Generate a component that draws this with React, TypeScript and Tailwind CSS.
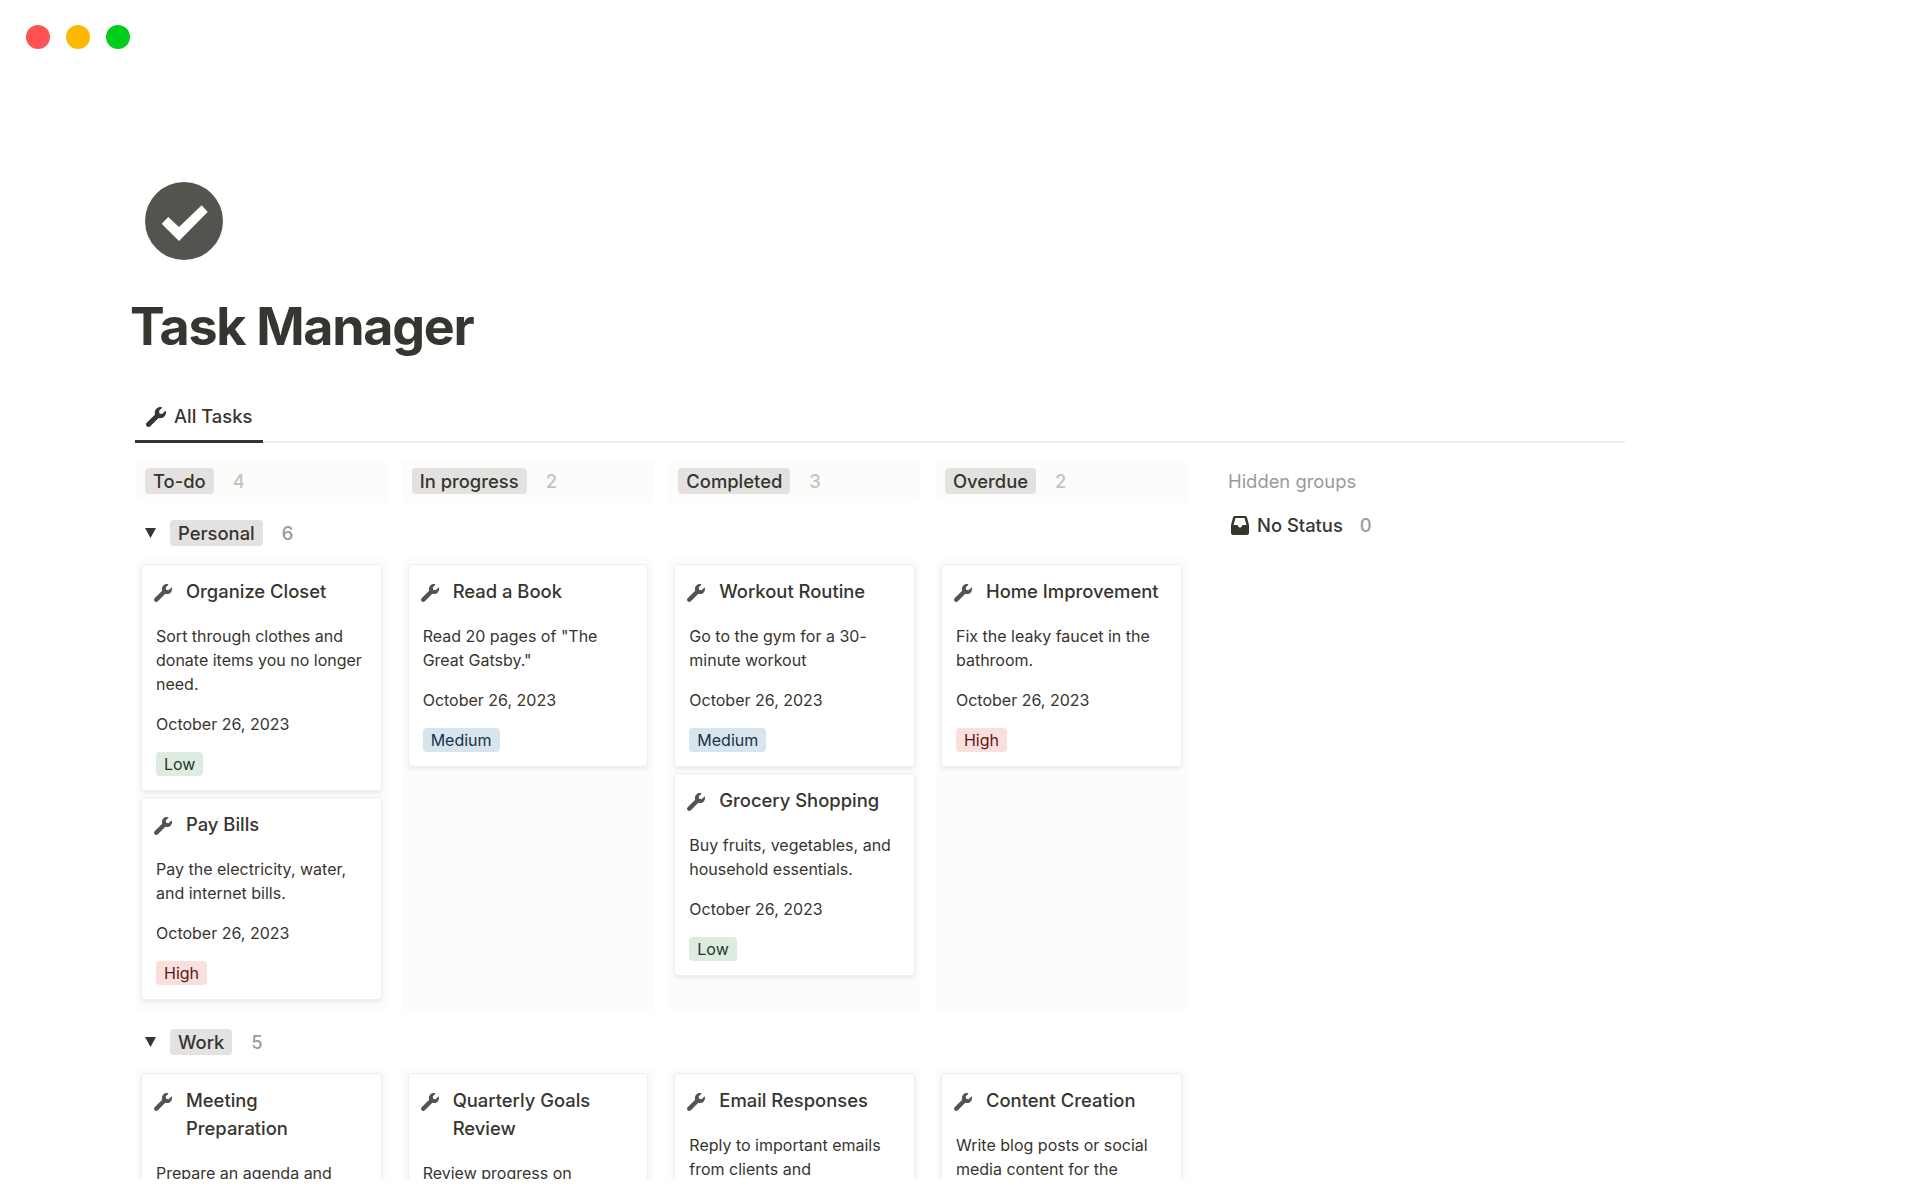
const wrench =
  "M507.73 109.1c-2.24-9.03-13.54-12.09-20.12-5.51l-74.36 74.36-67.88-11.31-11.31-67.88 74.36-74.36c6.62-6.62 3.43-17.9-5.66-20.16-47.38-11.74-99.55.91-136.58 37.93-39.64 39.64-50.55 97.1-34.05 147.2L18.74 402.76c-24.99 24.99-24.99 65.51 0 90.5 24.99 24.99 65.51 24.99 90.5 0l213.21-213.21c50.12 16.71 107.47 5.68 147.37-34.22 37.07-37.07 49.7-89.32 37.91-136.73z";

function Wrench({ className }: { className: string }) {
  return (
    <svg viewBox="0 0 512 512" className={className} fill="currentColor">
      <path d={wrench} />
    </svg>
  );
}

type Level = "Low" | "Medium" | "High";
type Task = { title: string; desc: string; level?: Level };

const levelClass: Record<Level, string> = {
  Low: "bg-[#dfebe0] text-[#1c3829]",
  Medium: "bg-[#d8e5ee] text-[#183347]",
  High: "bg-[#f9e0dd] text-[#5d1715]",
};

function Card({ task }: { task: Task }) {
  return (
    <div className={`rounded-[4px] bg-white border border-[#efeeed] shadow-[0_2px_4px_rgba(15,15,15,0.07)] pl-[14px] pr-[8px] pt-[12px] pb-[14px] ${task.level ? "" : "grow"}`}>
      <div className="flex text-[18.4px] leading-[28px] font-medium text-[#37352f]">
        <Wrench className="w-[18px] h-[18px] mt-[7px] ml-[-2px] mr-[14px] shrink-0 text-[#55534e]" />
        <div className="max-w-[176px]">{task.title}</div>
      </div>
      <div className="mt-[19px] text-[16px] leading-[24px] text-[#37352f]">{task.desc}</div>
      {task.level && (
        <>
          <div className="mt-[16px] text-[16px] leading-[24px] text-[#37352f]">October 26, 2023</div>
          <span className={`inline-block align-top mt-[16px] rounded-[4px] px-[8px] text-[16px] leading-[24px] ${levelClass[task.level]}`}>
            {task.level}
          </span>
        </>
      )}
    </div>
  );
}

function Pill({ children }: { children: string }) {
  return (
    <span className="rounded-[4px] bg-[#e3e2e0] px-[8px] h-[26px] pt-[1px] flex items-center text-[18.4px] font-medium text-[#37352f]">
      {children}
    </span>
  );
}

function Group({ name, count, columns, tall }: { name: string; count: number; columns: Task[][]; tall?: boolean }) {
  return (
    <div>
      <div className="flex items-center h-[26px] pl-[10px]">
        <svg viewBox="0 0 11 10" className="w-[11px] h-[10px] mr-[14px] text-[#37352f]" fill="currentColor">
          <path d="M0 0H11L5.5 10Z" />
        </svg>
        <Pill>{name}</Pill>
        <span className="ml-[19px] pt-[1px] text-[18.4px] font-medium text-[#9b9a97]">{count}</span>
      </div>
      <div className={`mt-[12px] grid grid-cols-[repeat(4,252.67px)] gap-x-[14px] ${tall ? "h-[455px]" : "h-[300px]"}`}>
        {columns.map((col, i) => (
          <div key={i} className="rounded-[8px] bg-[#fcfcfb] px-[6px] pt-[6px] flex flex-col gap-[6px]">
            {col.map((t) => (
              <Card key={t.title} task={t} />
            ))}
          </div>
        ))}
      </div>
    </div>
  );
}

const personal: Task[][] = [
  [
    { title: "Organize Closet", desc: "Sort through clothes and donate items you no longer need.", level: "Low" },
    { title: "Pay Bills", desc: "Pay the electricity, water, and internet bills.", level: "High" },
  ],
  [{ title: "Read a Book", desc: 'Read 20 pages of "The Great Gatsby."', level: "Medium" }],
  [
    { title: "Workout Routine", desc: "Go to the gym for a 30-minute workout", level: "Medium" },
    { title: "Grocery Shopping", desc: "Buy fruits, vegetables, and household essentials.", level: "Low" },
  ],
  [{ title: "Home Improvement", desc: "Fix the leaky faucet in the bathroom.", level: "High" }],
];

const work: Task[][] = [
  [{ title: "Meeting Preparation", desc: "Prepare an agenda and" }],
  [{ title: "Quarterly Goals Review", desc: "Review progress on" }],
  [{ title: "Email Responses", desc: "Reply to important emails from clients and" }],
  [{ title: "Content Creation", desc: "Write blog posts or social media content for the" }],
];

const headers: [string, number][] = [
  ["To-do", 4],
  ["In progress", 2],
  ["Completed", 3],
  ["Overdue", 2],
];

export default function App() {
  return (
    <div className="h-[1179px] overflow-hidden bg-white font-[family-name:Inter,sans-serif] text-[#37352f]">
      <div className="flex gap-[16px] pl-[26px] pt-[25px]">
        <div className="w-[24px] h-[24px] rounded-full bg-[#ff5252]" />
        <div className="w-[24px] h-[24px] rounded-full bg-[#ffb800]" />
        <div className="w-[24px] h-[24px] rounded-full bg-[#00cd1c]" />
      </div>

      <div className="pl-[135px]">
        <svg viewBox="0 0 78 78" className="w-[78px] h-[78px] mt-[133px] ml-[10px]">
          <circle cx="39" cy="39" r="39" fill="#55534e" />
          <path d="M16.7 41.7L23.3 35L34 45L56.7 23.3L62.7 30L34 59Z" fill="#fff" />
        </svg>
        <h1 className="mt-[36px] ml-[-5px] text-[52px] leading-[62px] font-bold tracking-[-1.3px] text-[#37352f]">Task Manager</h1>

        <div className="mt-[33px] w-[1490px] border-b-[2px] border-[#ededec] h-[52px]">
          <div className="w-[128px] h-[52px] border-b-[3px] border-[#37352f] flex items-center pl-[11px] gap-[8px] pt-[2px]">
            <Wrench className="w-[20px] h-[20px] text-[#37352f]" />
            <span className="text-[18.4px] font-medium text-[#37352f]">All Tasks</span>
          </div>
        </div>

        <div className="flex mt-[16px]">
          <div className="w-[1054px] shrink-0">
            <div className="grid grid-cols-[repeat(4,252.67px)] gap-x-[14px]">
              {headers.map(([name, n]) => (
                <div key={name} className="h-[44px] rounded-[8px] bg-[#fcfcfb] flex items-center pl-[10px]">
                  <Pill>{name}</Pill>
                  <span className="ml-[19px] pt-[1px] text-[18.4px] font-medium text-[#c4c3c1]">{n}</span>
                </div>
              ))}
            </div>
            <div className="mt-[17px] flex flex-col gap-[16px]">
              <Group name="Personal" count={6} columns={personal} tall />
              <Group name="Work" count={5} columns={work} />
            </div>
          </div>

          <div className="ml-[39px]">
            <div className="h-[44px] pt-[1px] flex items-center text-[18.4px] text-[#9b9a97]">Hidden groups</div>
            <div className="mt-[9px] h-[26px] flex items-center">
              <svg viewBox="0 0 18 19" className="w-[18px] h-[19px] ml-[3px] mr-[8px] text-[#37352f]" fill="currentColor">
                <path
                  fillRule="evenodd"
                  d="M4 0H14C15 0 15.8 .7 16 1.6L18 9V17C18 18.1 17.1 19 16 19H2C.9 19 0 18.1 0 17V9L2 1.6C2.2 .7 3 0 4 0ZM4.5 2L2.6 9H6.2C6.6 9 7 9.3 7.1 9.7C7.5 10.9 8.1 11.6 9 11.6C9.9 11.6 10.5 10.9 10.9 9.7C11 9.3 11.4 9 11.8 9H15.4L13.5 2Z"
                />
              </svg>
              <span className="pt-[1px] text-[18.4px] font-medium text-[#37352f]">No Status</span>
              <span className="ml-[17px] pt-[1px] text-[18.4px] font-medium text-[#9b9a97]">0</span>
            </div>
          </div>
        </div>
      </div>
    </div>
  );
}
